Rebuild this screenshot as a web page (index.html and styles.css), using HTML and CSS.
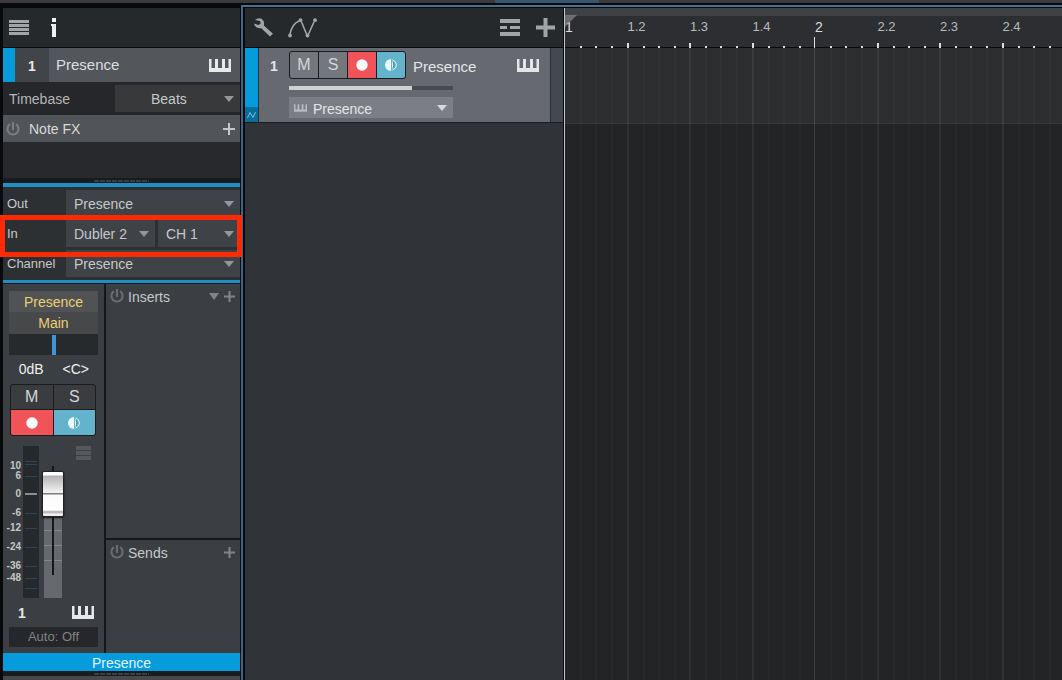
FILE: index.html
```
<!DOCTYPE html>
<html lang="en">
<head>
    <meta charset="UTF-8">
    <title>Presence - Arrange</title>
    <link rel="stylesheet" href="styles.css">
</head>

<body>
    <!-- shared icons -->
    <svg class="defs" width="0" height="0" aria-hidden="true">
        <symbol id="keys" viewBox="0 0 22 13">
            <path d="M0 0h2.500v9H6V0h3v9h4V0h3v9h3.500V0H22v13H0z"/>
        </symbol>
        <symbol id="power" viewBox="0 0 14 14">
            <path d="M4 2.2A5.6 5.6 0 1 0 10 2.2" fill="none" stroke="currentColor" stroke-width="2"/>
            <path d="M6 0h2v8H6z"/>
        </symbol>
        <symbol id="plus" viewBox="0 0 12 12">
            <path d="M5 0h2v5h5v2H7v5H5V7H0V5h5z"/>
        </symbol>
        <symbol id="record" viewBox="0 0 12 12">
            <circle cx="6" cy="6" r="5.7"/>
        </symbol>
        <symbol id="monitor" viewBox="0 0 12 12">
            <path d="M6 0v12A6 6 0 0 1 6 0z"/>
            <path d="M7.500 2.500v7M7.500 .8Q11.500 2.500 11.500 6T7.500 11.200" fill="none" stroke="currentColor" stroke-width=".9"/>
            <path d="M8 3Q10.500 6 8 9" fill="none" stroke="#4b7f90" stroke-width=".8"/>
        </symbol>
    </svg>

    <div class="topbar"><span></span></div>

    <div class="workspace">
        <!-- inspector -->
        <aside class="inspector">
            <div class="toolbar">
                <button type="button" class="icon-btn" aria-label="Menu">
                    <svg width="20" height="15"><path d="M0 0h20v3H0zM0 4h20v3H0zM0 8h20v3H0zM0 12h20v3H0z"/></svg>
                </button>
                <button type="button" class="icon-btn info" aria-label="Inspector">
                    <svg width="6" height="19"><path d="M1 0h4v4H1zM0 6h5v13H1V8H0z"/></svg>
                </button>
            </div>

            <div class="track-head">
                <span class="color"></span>
                <b>1</b>
                <span class="name">Presence</span>
                <svg width="22" height="13"><use href="#keys"/></svg>
            </div>

            <div class="timebase">
                <label for="timebase">Timebase</label>
                <span class="drop">
                    <select id="timebase"><option>Beats</option></select>
                </span>
            </div>

            <div class="note-fx">
                <button type="button" class="icon-btn dim" aria-label="Note FX on"><svg width="14" height="14"><use href="#power"/></svg></button>
                <span>Note FX</span>
                <button type="button" class="icon-btn" aria-label="Add Note FX"><svg width="12" height="12"><use href="#plus"/></svg></button>
            </div>
            <div class="fx-list"></div>
            <div class="handle"></div>

            <div class="io">
                <div class="io-row">
                    <label for="out">Out</label>
                    <span class="drop"><select id="out"><option>Presence</option></select></span>
                </div>
                <div class="io-row marked">
                    <label for="in">In</label>
                    <span class="drop device"><select id="in"><option>Dubler 2</option></select></span>
                    <span class="drop"><select aria-label="Input channel"><option>CH 1</option></select></span>
                </div>
                <div class="io-row">
                    <label for="channel">Channel</label>
                    <span class="drop"><select id="channel"><option>Presence</option></select></span>
                </div>
            </div>

            <div class="channel">
                <div class="strip">
                    <div class="names">
                        <button type="button">Presence</button>
                        <button type="button">Main</button>
                    </div>
                    <input type="range" class="pan" min="-100" max="100" value="0" aria-label="Pan">
                    <div class="values"><span>0dB</span><span>&lt;C&gt;</span></div>
                    <div class="switches">
                        <button type="button">M</button>
                        <button type="button">S</button>
                        <button type="button" class="rec" aria-label="Record"><svg width="12" height="12"><use href="#record"/></svg></button>
                        <button type="button" class="mon" aria-label="Monitor"><svg width="12" height="12"><use href="#monitor"/></svg></button>
                    </div>
                    <div class="level">
                        <svg class="scale" width="37" height="152">
                            <path d="M20 0h16v152H20z" fill="#25292c"/>
                            <path d="M22 15.500h12M22 18.500h12M22 30.500h12M22 67.500h12M22 82.500h12M22 101.500h12M22 120.500h12M22 132.500h12M22 142.500h12" stroke="#25485a"/>
                            <path d="M22 48h12" stroke="#8b8f92" stroke-width="2"/>
                            <g text-anchor="end">
                                <text x="18" y="23">10</text>
                                <text x="18" y="33">6</text>
                                <text x="18" y="51">0</text>
                                <text x="18" y="70">-6</text>
                                <text x="18" y="85">-12</text>
                                <text x="18" y="104">-24</text>
                                <text x="18" y="123">-36</text>
                                <text x="18" y="135">-48</text>
                            </g>
                        </svg>
                        <input type="range" class="fader" min="0" max="100" value="94" aria-label="Volume">
                        <svg class="group" width="15" height="14"><path d="M0 0h15v4H0zM0 5h15v4H0zM0 10h15v4H0z"/></svg>
                    </div>
                    <div class="ident">
                        <b>1</b>
                        <svg width="22" height="13"><use href="#keys"/></svg>
                    </div>
                    <button type="button" class="auto">Auto: Off</button>
                </div>
                <div class="racks">
                    <section class="inserts">
                        <button type="button" class="icon-btn dim" aria-label="Inserts on"><svg width="14" height="14"><use href="#power"/></svg></button>
                        <span>Inserts</span>
                        <button type="button" class="icon-btn" aria-label="Inserts menu"><svg width="10" height="7"><path d="M0 0h10L5 7z"/></svg></button>
                        <button type="button" class="icon-btn" aria-label="Add insert"><svg width="11" height="11"><path d="M4.500 0h2v4.500H11v2H6.500V11h-2V6.500H0v-2h4.500z"/></svg></button>
                    </section>
                    <section class="sends">
                        <button type="button" class="icon-btn dim" aria-label="Sends on"><svg width="14" height="14"><use href="#power"/></svg></button>
                        <span>Sends</span>
                        <button type="button" class="icon-btn" aria-label="Add send"><svg width="11" height="11"><path d="M4.500 0h2v4.500H11v2H6.500V11h-2V6.500H0v-2h4.500z"/></svg></button>
                    </section>
                </div>
            </div>
            <div class="channel-name">Presence</div>
            <div class="handle"></div>
            <div class="rest"></div>
        </aside>

        <!-- arrange view -->
        <main class="arrange">
            <div class="tracks">
                <div class="toolbar">
                    <button type="button" class="icon-btn" aria-label="Settings">
                        <svg width="20" height="19" viewBox="0 0 20 19"><path d="M1 2Q4-.5 7.500 .8 11 3 9.800 7.500L19 15.800 16 18.600 7 10Q3 11 .8 7.800L0 5.500 4.500 7 6.800 5.500 6 3z"/></svg>
                    </button>
                    <button type="button" class="icon-btn" aria-label="Automation">
                        <svg width="29" height="20" viewBox="0 0 29 20"><path d="M2 16Q4 6 11 3M13.500 4L18.500 16M20.500 16L26 4" fill="none" stroke="currentColor" stroke-width="1.600"/><circle cx="2" cy="17.500" r="1.900"/><circle cx="12.500" cy="2.200" r="1.900"/><circle cx="19.500" cy="17.500" r="1.900"/><circle cx="27" cy="2.200" r="1.900"/></svg>
                    </button>
                    <button type="button" class="icon-btn list" aria-label="Track list">
                        <svg width="20" height="17"><path d="M0 0h20v4H0zM0 7h7v3H0zM10 7h10v3H10zM0 13h20v4H0z"/></svg>
                    </button>
                    <button type="button" class="icon-btn" aria-label="Add track">
                        <svg width="19" height="19"><path d="M7.500 0h4v7.500H19v4h-7.500V19h-4v-7.500H0v-4h7.500z"/></svg>
                    </button>
                </div>

                <div class="track">
                    <div class="lane-color">
                        <button type="button" aria-label="Show automation"><svg width="9" height="8"><path d="M.5 7L3 1.500 6 6.500 8.500 1" fill="none" stroke="#6fc3e6"/></svg></button>
                    </div>
                    <b>1</b>
                    <div class="controls">
                        <div class="top">
                            <div class="switches">
                                <button type="button">M</button>
                                <button type="button">S</button>
                                <button type="button" class="rec" aria-label="Record"><svg width="12" height="12"><use href="#record"/></svg></button>
                                <button type="button" class="mon" aria-label="Monitor"><svg width="12" height="12"><use href="#monitor"/></svg></button>
                            </div>
                            <span class="name">Presence</span>
                            <svg width="22" height="13"><use href="#keys"/></svg>
                        </div>
                        <input type="range" class="volume" min="0" max="100" value="75" aria-label="Track volume">
                        <span class="drop instrument">
                            <svg width="13" height="8"><use href="#keys"/></svg>
                            <select aria-label="Instrument"><option>Presence</option></select>
                        </span>
                    </div>
                    <div class="meter"></div>
                </div>
            </div>

            <div class="timeline">
                <div class="ruler">
                    <svg class="ticks" width="100%" height="12">
                        <pattern id="tick" width="250" height="12" patternUnits="userSpaceOnUse">
                            <path fill="#ddd" d="M0 1h1v11H0zM63 7h2v5h-2zM125 7h2v5h-2zM188 7h2v5h-2zM16 10h2v2h-2zM31 10h2v2h-2zM47 10h2v2h-2zM79 10h2v2h-2zM94 10h2v2h-2zM110 10h2v2h-2zM141 10h2v2h-2zM156 10h2v2h-2zM172 10h2v2h-2zM204 10h2v2h-2zM219 10h2v2h-2zM235 10h2v2h-2z"/>
                        </pattern>
                        <rect width="100%" height="12" fill="url(#tick)"/>
                    </svg>
                    <div class="bar"><b>1</b><span>1.2</span><span>1.3</span><span>1.4</span></div>
                    <div class="bar"><b>2</b><span>2.2</span><span>2.3</span><span>2.4</span></div>
                </div>
                <div class="lanes">
                    <div class="lane"></div>
                    <svg class="grid" width="100%" height="100%">
                        <pattern id="gridlines" width="250" height="20" patternUnits="userSpaceOnUse">
                            <path fill="#fff" fill-opacity=".02" d="M16 0h2v20h-2zM31 0h2v20h-2zM47 0h2v20h-2zM79 0h2v20h-2zM94 0h2v20h-2zM110 0h2v20h-2zM141 0h2v20h-2zM156 0h2v20h-2zM172 0h2v20h-2zM204 0h2v20h-2zM219 0h2v20h-2zM235 0h2v20h-2z"/>
                            <path fill="#fff" fill-opacity=".06" d="M63 0h2v20h-2zM125 0h2v20h-2zM188 0h2v20h-2z"/>
                            <path fill="#fff" fill-opacity=".12" d="M0 0h1v20H0z"/>
                        </pattern>
                        <rect width="100%" height="100%" fill="url(#gridlines)"/>
                    </svg>
                </div>
                <div class="playhead"></div>
            </div>
        </main>
    </div>
</body>

</html>
```
FILE: styles.css
```
* {
    box-sizing: border-box;
}

body {
    display: flex;
    flex-direction: column;
    height: 100vh;
    margin: 0;
    overflow: hidden;
    background-color: #07090e;
    color: #c6c8ca;
    font: 14px/20px "Liberation Sans", Arial, sans-serif;
}

svg {
    display: block;
    flex: none;
    fill: currentColor;
}

.defs {
    position: absolute;
}

button,
select {
    font: inherit;
    color: inherit;
}

button {
    display: flex;
    align-items: center;
    justify-content: center;
    margin: 0;
    padding: 0;
    border: none;
    background: none;
}

.icon-btn {
    color: #a2a4a7;
}

.icon-btn.dim {
    color: #6b6e72;
}

input[type="range"] {
    display: block;
    margin: 0;
    appearance: none;
}

/* window edge */
.topbar {
    display: flex;
    flex: none;
    height: 3px;
    padding-left: 495px;
    background-color: #3a3a3c;
}

.topbar span {
    width: 104px;
    background-color: #35566e;
}

.workspace {
    display: grid;
    grid-template-columns: 241px minmax(0, 1fr);
    flex: 1;
    min-height: 0;
}

.toolbar {
    display: flex;
    align-items: center;
    height: 40px;
    background-color: #26292c;
    border-bottom: 1px solid #0a0b0d;
}

/* drop-downs */
.drop {
    position: relative;
    display: flex;
    align-items: center;
    flex: 1;
    min-width: 0;
    background-color: #3f4246;
}

.drop select {
    width: 100%;
    height: 100%;
    padding: 0 0 0 8px;
    border: none;
    background: none;
    appearance: none;
}

.drop::after {
    content: "";
    position: absolute;
    right: 6px;
    top: 50%;
    margin-top: -3px;
    border: 5px solid transparent;
    border-top: 6px solid #94979a;
    border-bottom: none;
    pointer-events: none;
}

/* inspector */
.inspector {
    display: flex;
    flex-direction: column;
    padding: 5px 1px 0 3px;
    background-color: #08090b;
}

.inspector .toolbar {
    flex: none;
    gap: 22px;
    padding-left: 6px;
}

.info {
    color: #f0f0f0;
}

.track-head {
    display: flex;
    align-items: center;
    flex: none;
    height: 34px;
    padding-right: 9px;
    background-color: #53575c;
    color: #e8e9ea;
    font-size: 15px;
}

.track-head .color {
    align-self: stretch;
    width: 12px;
    background-color: #069bdb;
}

.track-head b {
    align-self: stretch;
    width: 34px;
    background-color: #414448;
    font-size: 14px;
    line-height: 36px;
    text-align: center;
}

.track-head .name {
    flex: 1;
    padding-left: 7px;
    color: #dddee0;
}

.timebase {
    display: flex;
    flex: none;
    height: 33px;
    padding: 3px 0;
    background-color: #25272a;
}

.timebase label {
    width: 112px;
    padding-left: 6px;
    line-height: 28px;
    color: #b4b6b8;
}

.timebase .drop {
    background-color: #37393b;
}

.timebase select {
    padding-left: 36px;
}

.note-fx {
    display: flex;
    align-items: center;
    flex: none;
    height: 27px;
    padding: 0 5px 0 3px;
    background-color: #515458;
    color: #d8d9db;
}

.note-fx span {
    flex: 1;
    padding-left: 9px;
}

.note-fx .icon-btn {
    color: #c4c6c8;
}

.note-fx .dim {
    color: #7b7d80;
}

.fx-list {
    flex: none;
    height: 36px;
    background-color: #28292c;
}

.handle {
    flex: none;
    height: 5px;
    padding: 2px 91px 1px;
    background: repeating-linear-gradient(90deg, #3b3f42 0 5px, #181c1f 5px 6px) content-box, #181c1f;
}

/* routing */
.io {
    display: grid;
    flex: none;
    gap: 3px;
    padding: 3px 0;
    background-color: #2d3033;
    border-top: 4px solid #2090c4;
    border-bottom: 3px solid #2090c4;
}

.io-row {
    position: relative;
    display: flex;
    height: 27px;
}

.io-row label {
    width: 63px;
    padding-left: 4px;
    font-size: 13px;
    line-height: 27px;
}

.io-row .device {
    flex: 0 0 89px;
    margin-right: 3px;
}

.marked::before {
    content: "";
    position: absolute;
    z-index: 1;
    inset: -5px -2px -10px -3px;
    border: 5px solid #fc2b05;
    pointer-events: none;
}

/* channel strip */
.channel {
    display: grid;
    grid-template-columns: 101px 1fr;
    gap: 2px;
    flex: none;
    height: 370px;
    padding-top: 1px;
    background-color: #15181b;
}

.strip {
    padding-top: 7px;
    background-color: #3b3e42;
}

.names {
    margin: 0 6px;
}

.names button {
    width: 100%;
    height: 21px;
    background-color: #515254;
    color: #ecd072;
}

.names button + button {
    height: 22px;
    background-color: #47484a;
}

.pan {
    width: 89px;
    height: 21px;
    margin: 0 6px !important;
    background-color: #272a2d;
}

.pan::-webkit-slider-thumb {
    width: 4px;
    height: 20px;
    background-color: #3b96dc;
    appearance: none;
}

.values {
    display: flex;
    height: 29px;
    padding: 0 6px;
    color: #f0f0f0;
    line-height: 29px;
    text-align: center;
}

.values span {
    flex: 1;
}

.switches {
    display: grid;
    grid-template-columns: repeat(2, 1fr);
    gap: 1px;
    border: 1px solid #1a1c1f;
    border-radius: 3px;
    background-color: #1a1c1f;
    overflow: hidden;
}

.strip .switches {
    margin: 0 8px 0 7px;
}

.switches button {
    height: 24px;
    background-color: #3a3c40;
    color: #d4d5d7;
    font-size: 16px;
}

.switches .rec {
    background-color: #f05458;
    color: #fff;
}

.switches .mon {
    background-color: #62b3cb;
    color: #edf8fb;
}

.strip .rec,
.strip .mon {
    height: 25px;
}

.level {
    display: flex;
    margin-top: 10px;
}

.scale text {
    fill: #c5c7c9;
    font-size: 10px;
    font-weight: bold;
}

.fader {
    width: 22px;
    height: 132px;
    margin: 20px 12px 0 2px !important;
    background:
        linear-gradient(#15171a, #15171a) 10px 0 / 2px 109px no-repeat,
        repeating-linear-gradient(transparent 0 14px, #85888b 14px 15px) 2px 50px / 18px 48px no-repeat,
        linear-gradient(#66696d, #66696d) 2px 8px / 18px 124px no-repeat;
    direction: rtl;
    writing-mode: vertical-lr;
}

.fader::-webkit-slider-thumb {
    width: 22px;
    height: 46px;
    border: 1px solid #202225;
    border-radius: 2px;
    background: linear-gradient(#fff 0 3px, #b4b4b4 4px, #f4f4f4 21px, #77797b 21px 22px, #fafafa 23px, #fff 38px, #aaa 40px, #eee 42px);
    box-shadow: 0 1px 2px #111;
    appearance: none;
}

.group {
    color: #56595b;
}

.ident {
    display: flex;
    align-items: center;
    justify-content: space-between;
    height: 29px;
    padding: 0 10px 0 15px;
    color: #e6e7e8;
}

.auto {
    width: 89px;
    height: 20px;
    margin: 0 6px;
    background-color: #25272a;
    color: #808285;
    font-size: 13px;
}

.racks {
    display: grid;
    grid-template-rows: 254px 1fr;
    gap: 2px;
}

.racks section {
    display: flex;
    align-items: flex-start;
    padding: 5px 5px 0 4px;
    background-color: #3b3e42;
    line-height: 16px;
}

.racks span {
    flex: 1;
    padding-left: 4px;
}

.racks .icon-btn {
    height: 14px;
    margin-left: 5px;
    color: #828588;
}

.racks .dim {
    margin-left: 0;
    color: #6b6e72;
}

.channel-name {
    flex: none;
    height: 18px;
    background-color: #069bdb;
    color: #e4f4fb;
    line-height: 20px;
    text-align: center;
}

.rest {
    flex: 1;
    background-color: #46484b;
}

/* arrange */
.arrange {
    display: grid;
    grid-template-columns: 319px minmax(0, 1fr);
    margin-top: 2px;
    padding: 1px 0 0 2px;
    border-top: 2px solid #4a7189;
    border-left: 2px solid #3f6684;
}

.tracks {
    border-right: 1px solid #08090b;
    background-color: #303337;
}

.tracks .toolbar {
    gap: 14px;
    padding: 0 8px 0 9px;
}

.tracks .list {
    margin-left: auto;
    margin-right: 2px;
}

.track {
    display: flex;
    height: 75px;
    border-bottom: 1px solid #1a1c1f;
    background-color: #666a70;
    color: #e4e5e7;
}

.lane-color {
    display: flex;
    align-items: flex-end;
    width: 14px;
    border-right: 1px solid #22313a;
    background-color: #069bdb;
}

.lane-color button {
    width: 13px;
    height: 15px;
    background-color: #0b6d99;
}

.track > b {
    width: 30px;
    line-height: 36px;
    text-align: center;
}

.controls {
    flex: 1;
    padding-top: 3px;
}

.top {
    display: flex;
    align-items: center;
    padding-right: 11px;
    font-size: 15px;
}

.top .name {
    flex: 1;
    padding: 3px 0 0 7px;
}

.top .switches {
    grid-template-columns: repeat(4, 28px);
}

.top .switches button {
    height: 26px;
    background-color: #74787d;
}

.top .switches .rec {
    background-color: #f05458;
}

.top .switches .mon {
    background-color: #62b3cb;
}

.volume {
    width: 164px;
    height: 4px;
    margin: 7px 0 !important;
    background: linear-gradient(90deg, #cfd0d1 75%, #484b51 75%);
}

.volume::-webkit-slider-thumb {
    width: 1px;
    height: 4px;
    background-color: #cfd0d1;
    appearance: none;
}

.instrument {
    width: 164px;
    height: 21px;
    padding-left: 5px;
    background-color: #7b7f85;
}

.instrument svg {
    color: #b9bbbe;
}

.instrument select {
    padding: 2px 0 0 6px;
}

.instrument::after {
    border-top-color: #d8d9db;
}

.meter {
    width: 13px;
    border-left: 1px solid #2b2e33;
    background-color: #44484f;
}

/* timeline */
.timeline {
    position: relative;
    display: flex;
    flex-direction: column;
    overflow: hidden;
}

.ruler {
    position: relative;
    display: flex;
    height: 40px;
    border-top: 8px solid #3e4246;
    border-bottom: 1px solid #08090b;
    background-color: #2d2e31;
}

.ticks {
    position: absolute;
    left: 0;
    bottom: -1px;
}

.bar {
    display: grid;
    grid-template-columns: repeat(4, 1fr);
    flex: 0 0 250px;
    color: #b9bbbd;
    font-size: 13px;
    line-height: 22px;
}

.bar > * {
    padding-left: 1px;
}

.bar b {
    color: #dcdde0;
    font-size: 14px;
    font-weight: normal;
}

.lanes {
    position: relative;
    flex: 1;
    background-color: #232425;
}

.lane {
    height: 76px;
    border-bottom: 1px solid #353637;
    background-color: #2d2e2f;
}

.grid {
    position: absolute;
    inset: 0;
}

.playhead {
    position: absolute;
    top: 0;
    bottom: 0;
    left: 0;
    width: 1px;
    background-color: #c4c6c8;
}

.playhead::before {
    content: "";
    position: absolute;
    top: 7px;
    left: 1px;
    border-top: 12px solid #85878d;
    border-right: 12px solid transparent;
    opacity: .7;
}
```
